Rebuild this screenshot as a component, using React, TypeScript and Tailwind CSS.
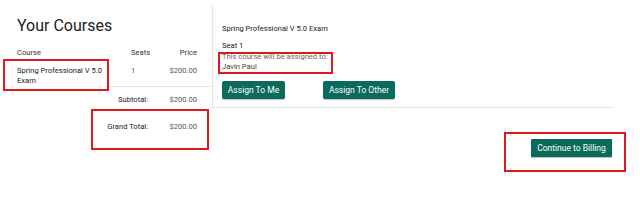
export default function App() {
  return (
    <div className="relative w-[640px] h-[207px] bg-white text-[#222] font-['Roboto','Liberation_Sans',sans-serif]">
      <div className="flex">
        {/* Cart */}
        <div className="w-[212px] shrink-0">
          <h2 className="ml-[17px] mt-[18px] text-[16px] leading-[16px] text-[#222]">Your Courses</h2>

          <div className="mt-[13px] ml-[17px] w-[180px] grid grid-cols-[114px_1fr_auto] text-[7.6px] leading-[11px] text-[#333]">
            <div>Course</div>
            <div>Seats</div>
            <div className="text-right">Price</div>
          </div>

          <div className="mt-[8px] ml-[17px] w-[180px] grid grid-cols-[114px_1fr_auto] text-[7.6px] leading-[10px]">
            <div className="text-[#1a1a1a]">
              Spring Professional V 5.0
              <br />
              Exam
            </div>
            <div className="text-[#555]">1</div>
            <div className="text-right text-[#555]">$200.00</div>
          </div>
          <div className="ml-[108px] h-px bg-[#e2e2e2]" />

          <div className="mt-[7px] ml-[17px] w-[180px] flex justify-end text-[7.6px] leading-[11px]">
            <div className="text-[#1a1a1a]">Subtotal:</div>
            <div className="w-[49px] text-right text-[#555]">$200.00</div>
          </div>

          <div className="mt-[16px] ml-[17px] w-[180px] flex justify-end text-[7.6px] leading-[11px]">
            <div className="text-[#1a1a1a]">Grand Total:</div>
            <div className="w-[49px] text-right text-[#555]">$200.00</div>
          </div>
        </div>

        {/* Seat assignment */}
        <div className="w-[400px] shrink-0">
          <div className="mt-[5px] h-[103px] border-l border-b border-[#e4e4e4] pl-[9px] pt-[18px] text-[7.6px]">
            <div className="leading-[11px] text-[#1a1a1a]">Spring Professional V 5.0 Exam</div>
            <div className="mt-[6px] leading-[11px] text-[#1a1a1a]">Seat 1</div>
            <div className="leading-[11px] text-[#666]">This course will be assigned to:</div>
            <div className="leading-[10px] text-[#444]">Javin Paul</div>
            <div className="mt-[9px] flex gap-[38px]">
              <button className="h-[18px] w-[63px] rounded-[2px] bg-[#0a6a5c] text-[8.5px] text-white shadow-[0_1px_1px_rgba(0,0,0,0.25)]">
                Assign To Me
              </button>
              <button className="h-[18px] w-[72px] rounded-[2px] bg-[#0a6a5c] text-[8.5px] text-white shadow-[0_1px_1px_rgba(0,0,0,0.25)]">
                Assign To Other
              </button>
            </div>
          </div>
        </div>
      </div>

      <div className="w-[612px] flex justify-end">
        <button className="mt-[7px] h-[18px] w-[81px] rounded-[1px] bg-[#0a6a5c] text-[8.5px] text-white shadow-[0_1px_1px_rgba(0,0,0,0.25)]">
          Continue to Billing
        </button>
      </div>

      {/* annotation boxes */}
      <div className="absolute left-[3px] top-[59px] w-[106px] h-[32px] border-2 border-[#e3161b]" />
      <div className="absolute left-[91px] top-[109px] w-[118px] h-[41px] border-2 border-[#e3161b]" />
      <div className="absolute left-[218px] top-[52px] w-[115px] h-[22px] border-2 border-[#e3161b]" />
      <div className="absolute left-[504px] top-[132px] w-[122px] h-[40px] border-2 border-[#e3161b]" />
    </div>
  )
}
